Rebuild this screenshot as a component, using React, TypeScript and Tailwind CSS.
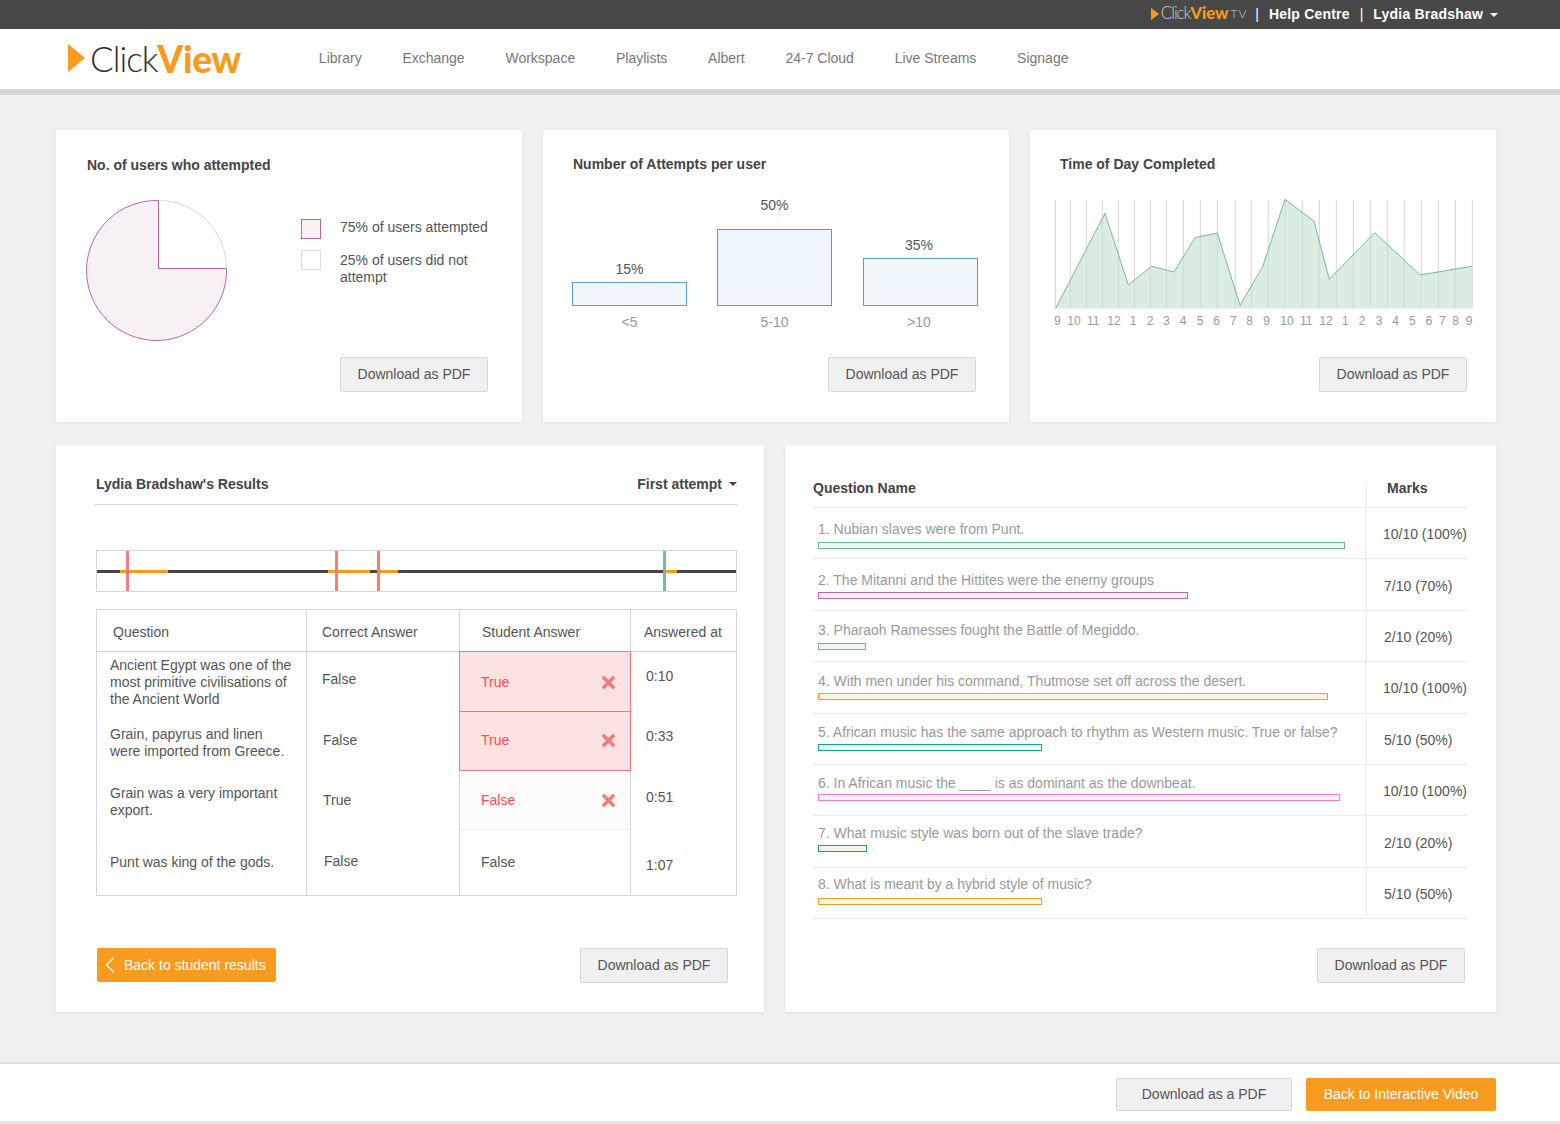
import { ChevronLeft } from "lucide-react";
import { FaTimes } from "react-icons/fa";

const navLinks = ["Library", "Exchange", "Workspace", "Playlists", "Albert", "24-7 Cloud", "Live Streams", "Signage"];

const chartPoints = [
   [5.7, 113.3], [55, 18.3], [78.3, 90], [101.7, 71.3], [124, 77], [145, 42.7], [167.3, 38],
   [190, 110.3], [212.7, 71.7], [235, 4.3], [264, 26.3], [279.3, 84.3], [324.7, 37.7], [370, 80], [422, 71.3],
];
const gridLines = [5.3, 20.3, 36.3, 52.3, 68.3, 84.3, 100.3, 116.3, 133.3, 150.3, 167.3, 185.3, 201.3, 218.3, 235.3, 252.3, 269.3, 286.3, 303.3, 320.3, 337.3, 354.3, 371.3, 388.3, 405.3, 422.3];
const hourLabels: [string, number][] = [
   ["9", 7.3], ["10", 24], ["11", 43.3], ["12", 64], ["1", 83], ["2", 100], ["3", 116.3], ["4", 133], ["5", 150], ["6", 166.7],
   ["7", 183.3], ["8", 199.7], ["9", 216.7], ["10", 237], ["11", 256.3], ["12", 276], ["1", 295.3], ["2", 312], ["3", 329],
   ["4", 345.7], ["5", 362.3], ["6", 379], ["7", 392.3], ["8", 405.7], ["9", 419],
];

const answerRows = [
   {
      question: "Ancient Egypt was one of the most primitive civilisations of the Ancient World",
      correct: "False",
      student: "True",
      time: "0:10",
      questionCls: "pt-[5px]",
      correctCls: "pt-[17px] pl-[15px]",
      studentCls: "-ml-px -mt-px border border-[#f07878] bg-[#fde2e2] text-[#ff4d4d] pt-px",
      timeCls: "pt-[14px]",
      wrong: true,
   },
   {
      question: "Grain, papyrus and linen were imported from Greece.",
      correct: "False",
      student: "True",
      time: "0:33",
      questionCls: "pt-[14px]",
      correctCls: "pt-[18px] pl-[16px]",
      studentCls: "-ml-px -mt-px border border-[#f07878] bg-[#fde2e2] text-[#ff4d4d] pb-[2px]",
      timeCls: "pt-[14px]",
      wrong: true,
   },
   {
      question: "Grain was a very important export.",
      correct: "True",
      student: "False",
      time: "0:51",
      questionCls: "pt-[14px]",
      correctCls: "pt-[19px] pl-[16px]",
      studentCls: "border-b border-r border-b-[#f5efec] border-r-[#d6d6d6] bg-[#fdfcfb] text-[#ff4d4d]",
      timeCls: "pt-[16px]",
      wrong: true,
   },
   {
      question: "Punt was king of the gods.",
      correct: "False",
      student: "False",
      time: "1:07",
      questionCls: "pt-[24px]",
      correctCls: "pt-[21px] pl-[17px]",
      studentCls: "border-r border-r-[#d6d6d6] pb-[2px]",
      timeCls: "pt-[25px]",
      wrong: false,
   },
];

const questions = [
   { name: "1. Nubian slaves were from Punt.", marks: "10/10 (100%)", bar: "w-[527px] border-[#6cb88a] bg-[#eef7f1] mt-[3px]", pad: "pt-[11px]" },
   { name: "2. The Mitanni and the Hittites were the enemy groups", marks: "7/10 (70%)", bar: "w-[370px] border-[#b967a8] bg-[#f7f0f6] mt-[2px]", pad: "pt-[11px]" },
   { name: "3. Pharaoh Ramesses fought the Battle of Megiddo.", marks: "2/10 (20%)", bar: "w-[48px] border-[#7ba3c2] bg-[#eef4fa] mt-[3px]", pad: "pt-[9px]" },
   { name: "4. With men under his command, Thutmose set off across the desert.", marks: "10/10 (100%)", bar: "w-[510px] border-[#f99b1f] bg-[#fef2e4] mt-[2px]", pad: "pt-[9px]" },
   { name: "5. African music has the same approach to rhythm as Western music. True or false?", marks: "5/10 (50%)", bar: "w-[224px] border-[#0fa58c] bg-[#e8f6f4] mt-[2px]", pad: "pt-[8px]" },
   { name: "6. In African music the ____ is as dominant as the downbeat.", marks: "10/10 (100%)", bar: "w-[522px] border-[#ff77c8] bg-[#fff0f9] mt-[1px]", pad: "pt-[8px]" },
   { name: "7. What music style was born out of the slave trade?", marks: "2/10 (20%)", bar: "w-[49px] border-[#27a53b] bg-[#edf7ee] mt-[2px]", pad: "pt-[7px]" },
   { name: "8. What is meant by a hybrid style of music?", marks: "5/10 (50%)", bar: "w-[224px] border-[#f99b1f] bg-[#fef5ea] mt-[4px]", pad: "pt-[6px]" },
];

function Caret({ className }: { className: string }) {
   return <span className={`inline-block h-0 w-0 border-x-4 border-t-4 border-x-transparent ${className}`} />;
}

function DownloadButton({ className = "" }: { className?: string }) {
   return (
      <button className={`h-[35px] w-[148px] rounded-[2px] border border-[#d6d6d6] bg-[#f0f0f0] pb-[2px] text-sm text-[#555] ${className}`}>
         Download as PDF
      </button>
   );
}

function AttemptBar({ value, label, barCls, gapCls, labelCls = "", className = "" }: { value: string; label: string; barCls: string; gapCls: string; labelCls?: string; className?: string }) {
   return (
      <div className={`flex w-[115px] flex-col items-center ${className}`}>
         <span className={`leading-5 text-[#555] ${gapCls} ${labelCls}`}>{value}</span>
         <div className={`w-full border border-[#5b9bd5] bg-[#eff6fc] ${barCls}`} />
         <span className={`mt-[6px] leading-5 text-[#999] ${labelCls}`}>{label}</span>
      </div>
   );
}

function TimeChart() {
   const line = chartPoints.map(([x, y]) => `${x},${y}`).join(" ");
   return (
      <svg width="430" height="135" viewBox="0 0 430 135" className="-ml-[10px] mt-[21px] block">
         {gridLines.map((x) => (
            <line key={x} x1={x} x2={x} y1="5" y2="113.5" stroke="#d4d4d4" strokeWidth="1" />
         ))}
         <polygon points={`5.7,113.5 ${line} 422,113.5`} fill="#c3dfcf" fillOpacity="0.6" />
         <polyline points={line} fill="none" stroke="#7db897" strokeWidth="1" />
         {hourLabels.map(([label, x], i) => (
            <text key={i} x={x} y="130" textAnchor="middle" fontSize="12" fill="#999">
               {label}
            </text>
         ))}
      </svg>
   );
}

export default function App() {
   return (
      <div className="flex min-h-[1124px] flex-col bg-[#f0f0f0] font-['Liberation_Sans',Arial,sans-serif] text-sm">
         <div className="flex h-[29px] items-center justify-end bg-[#484848] pb-[2px] pr-[62px] font-bold text-white">
            <span className="mr-[2px] h-0 w-0 border-y-[6px] border-l-[8px] border-y-transparent border-l-[#f99b1f]" />
            <span className="font-['Lato',sans-serif] text-[17px] font-light tracking-[-1.1px] text-[#ccc]">Click</span>
            <span className="font-['Lato',sans-serif] text-[16.5px] font-black text-[#f99b1f]">View</span>
            <span className="ml-[2px] font-['Lato',sans-serif] text-[12px] font-light tracking-[1px] text-[#ccc]">TV</span>
            <span className="ml-[8px] mr-[10px] font-normal">|</span>
            <span className="tracking-[0.2px]">Help Centre</span>
            <span className="mx-[10px] font-normal">|</span>
            <span className="tracking-[0.2px]">Lydia Bradshaw</span>
            <Caret className="ml-[7px] mt-[2px] border-t-white" />
         </div>

         <nav className="flex h-[66px] items-center border-b-[6px] border-[#d6d6d6] bg-white pb-[2px] pl-[68px]">
            <span className="h-0 w-0 border-y-[14px] border-l-[17px] border-y-transparent border-l-[#f99b1f]" />
            <span className="ml-[5px] font-['Lato',sans-serif] text-[35px] font-light leading-none tracking-[-1px] text-[#2a2a2a]">Click</span>
            <span className="font-['Lato',sans-serif] text-[37px] font-black leading-none tracking-[-0.4px] text-[#f99b1f]">View</span>
            <div className="ml-[78px] flex gap-[40.75px] text-[#777]">
               {navLinks.map((link) => (
                  <a key={link}>{link}</a>
               ))}
            </div>
         </nav>

         <main className="pl-[56px] pr-[64px] pt-[35px]">
            <div className="flex gap-[21px]">
               <section className="flex h-[292px] w-[466px] flex-col bg-white pl-[28px] pt-[25px] shadow-[0_1px_3px_rgba(0,0,0,0.07)]">
                  <h2 className="ml-[3px] font-bold leading-5 text-[#444]">No. of users who attempted</h2>
                  <div className="mt-[23px] flex">
                     <svg width="146" height="146" viewBox="0 0 146 146">
                        <path d="M74.5 2.5 A68 68 0 0 1 142.5 70.5" fill="none" stroke="#d8d8d8" />
                        <path d="M74.5 70.5 H142.5 A70 70 0 1 1 74.5 2.5 Z" fill="#f7f1f6" stroke="#b967a8" />
                     </svg>
                     <div className="ml-[71px] mt-[21px] w-[170px] leading-[17px] text-[#555]">
                        <div className="flex">
                           <span className="h-5 w-5 shrink-0 border border-[#b967a8] bg-[#f7f1f6]" />
                           <span className="ml-[19px] whitespace-nowrap">75% of users attempted</span>
                        </div>
                        <div className="mt-[11px] flex">
                           <span className="h-5 w-5 shrink-0 border border-[#dcdcdc]" />
                           <span className="ml-[19px] pt-[2px]">25% of users did not attempt</span>
                        </div>
                     </div>
                  </div>
                  <DownloadButton className="mb-[30px] mr-[34px] mt-auto self-end" />
               </section>

               <section className="flex h-[292px] w-[466px] flex-col bg-white pl-[30px] pt-[24px] shadow-[0_1px_3px_rgba(0,0,0,0.07)]">
                  <h2 className="font-bold leading-5 text-[#444]">Number of Attempts per user</h2>
                  <div className="-ml-px mt-[21px] flex items-end gap-[30px]">
                     <AttemptBar value="15%" label="<5" barCls="h-[24px]" gapCls="mb-[3px]" />
                     <AttemptBar value="50%" label="5-10" barCls="h-[77px]" gapCls="mb-[14px]" />
                     <AttemptBar value="35%" label=">10" barCls="h-[48px]" gapCls="mb-[3px]" labelCls="pr-[3px]" className="ml-px" />
                  </div>
                  <DownloadButton className="mb-[30px] mr-[33px] mt-auto self-end" />
               </section>

               <section className="flex h-[292px] w-[466px] flex-col bg-white pl-[30px] pt-[24px] shadow-[0_1px_3px_rgba(0,0,0,0.07)]">
                  <h2 className="font-bold leading-5 text-[#444]">Time of Day Completed</h2>
                  <TimeChart />
                  <DownloadButton className="mb-[30px] mr-[29px] mt-auto self-end" />
               </section>
            </div>

            <div className="mt-[23px] flex gap-[21px]">
               <section className="flex h-[567px] w-[708px] flex-col bg-white pl-[40px] pr-[27px] pt-[29px] shadow-[0_1px_3px_rgba(0,0,0,0.07)]">
                  <div className="-ml-px flex items-center justify-between border-b border-[#d6d6d6] pb-[10px] pl-px font-bold leading-5 text-[#444]">
                     <h2>Lydia Bradshaw's Results</h2>
                     <span className="flex items-center">
                        First attempt
                        <Caret className="ml-[7px] border-t-[#444]" />
                     </span>
                  </div>

                  <div className="relative mt-[45px] flex h-[42px] items-center border border-[#d6d6d6]">
                     <div className="h-[3px] w-full bg-[#444]" />
                     <span className="absolute left-[23px] top-[19px] h-[3px] w-[48px] bg-[#f99b1f]" />
                     <span className="absolute left-[231px] top-[19px] h-[3px] w-[42px] bg-[#f99b1f]" />
                     <span className="absolute left-[281px] top-[19px] h-[3px] w-[20px] bg-[#f99b1f]" />
                     <span className="absolute left-[566px] top-[19px] h-[3px] w-[14px] bg-[#f99b1f]" />
                     <span className="absolute left-[29px] top-0 h-full w-[3px] bg-[#f47c7c]" />
                     <span className="absolute left-[238px] top-0 h-full w-[3px] bg-[#f47c7c]" />
                     <span className="absolute left-[280px] top-0 h-full w-[3px] bg-[#f47c7c]" />
                     <span className="absolute left-[566px] top-0 h-full w-[3px] bg-[#7db897]" />
                  </div>

                  <div className="mt-[17px] grid grid-cols-[210px_153px_171px_105px] grid-rows-[42px_60px_59px_59px_65px] border border-[#d6d6d6] text-[#555]">
                     <div className="flex items-center border-b border-r border-[#d6d6d6] pl-[16px] pt-[2px]">Question</div>
                     <div className="flex items-center border-b border-r border-[#d6d6d6] pl-[15px] pt-[2px]">Correct Answer</div>
                     <div className="flex items-center border-b border-r border-[#d6d6d6] pl-[22px] pt-[2px]">Student Answer</div>
                     <div className="flex items-center border-b border-[#d6d6d6] pl-[13px] pt-[2px]">Answered at</div>
                     {answerRows.map((row) => (
                        <div key={row.question} className="contents">
                           <div className={`border-r border-[#d6d6d6] pl-[13px] pr-[10px] leading-[17px] ${row.questionCls}`}>{row.question}</div>
                           <div className={`border-r border-[#d6d6d6] leading-5 ${row.correctCls}`}>{row.correct}</div>
                           <div className={`flex items-center justify-between pl-[21px] pr-[12px] ${row.studentCls}`}>
                              <span>{row.student}</span>
                              {row.wrong && <FaTimes className="mt-px text-[#f47c7c]" size={19} />}
                           </div>
                           <div className={`pl-[15px] leading-5 ${row.timeCls}`}>{row.time}</div>
                        </div>
                     ))}
                  </div>

                  <div className="mt-[52px] flex items-start justify-between pl-px pr-[9px]">
                     <button className="flex h-[34px] w-[179px] items-center rounded-[2px] bg-[#f99b1f] text-white">
                        <ChevronLeft size={28} strokeWidth={1} className="-ml-px" />
                        Back to student results
                     </button>
                     <DownloadButton />
                  </div>
               </section>

               <section className="flex h-[567px] w-[711px] flex-col bg-white pl-[28px] pt-[33px] shadow-[0_1px_3px_rgba(0,0,0,0.07)]">
                  <div className="flex h-[30px] w-[654px] border-b border-[#ebebeb] font-bold leading-5 text-[#444]">
                     <span className="w-[553px]">Question Name</span>
                     <span className="mt-[5px] border-l border-[#ebebeb] pl-[20px]">
                        <span className="-mt-[5px] block">Marks</span>
                     </span>
                  </div>
                  {questions.map((q) => (
                     <div key={q.name} className="flex h-[51.4px] w-[654px] border-b border-[#ebebeb]">
                        <div className={`w-[553px] pl-[5px] ${q.pad}`}>
                           <div className="leading-5 text-[#999]">{q.name}</div>
                           <div className={`h-[7px] border ${q.bar}`} />
                        </div>
                        <div className="flex flex-1 items-center whitespace-nowrap border-l border-[#ebebeb] pl-[17px] pt-[2px] text-[#555]">{q.marks}</div>
                     </div>
                  ))}
                  <DownloadButton className="mr-[31px] mt-[29px] self-end" />
               </section>
            </div>
         </main>

         <footer className="mt-[51px] flex h-[61px] items-start justify-end gap-[14px] border-b-[3px] border-t border-b-[#e4e4e4] border-t-[#dcdcdc] bg-white pr-[64px] pt-[14px] shadow-[0_-1px_2px_rgba(0,0,0,0.06)]">
            <button className="h-[33px] w-[176px] rounded-[2px] border border-[#d6d6d6] bg-[#f0f0f0] pb-px text-[#555]">Download as a PDF</button>
            <button className="h-[33px] w-[190px] rounded-[2px] bg-[#f99b1f] pb-px text-white">Back to Interactive Video</button>
         </footer>
      </div>
   );
}
